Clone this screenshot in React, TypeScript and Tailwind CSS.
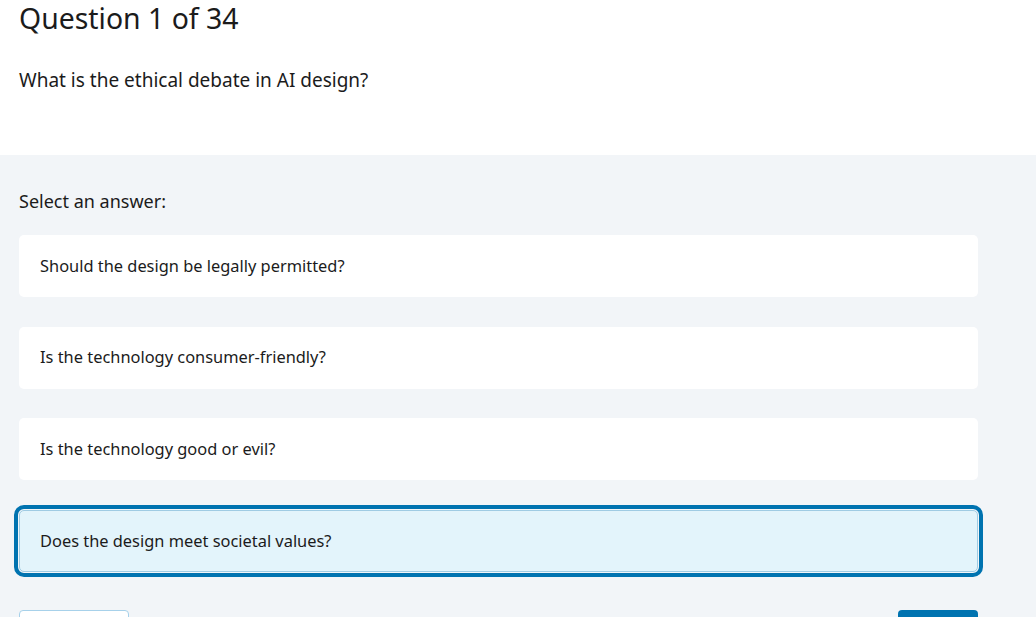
const OPTIONS = [
  'Should the design be legally permitted?',
  'Is the technology consumer-friendly?',
  'Is the technology good or evil?',
  'Does the design meet societal values?',
];

export default function App() {
  const selected = 3;
  return (
    <div className="h-[617px] overflow-hidden bg-white text-[#1b1b1b]" style={{ fontFamily: '"Noto Sans", "Open Sans", sans-serif' }}>
      <div className="h-[155px] px-[19px] pt-[3px]">
        <h1 className="text-[28.4px] leading-[30px]">Question 1 of 34</h1>
        <p className="mt-[33px] text-[19px] leading-[28px]">What is the ethical debate in AI design?</p>
      </div>

      <div className="bg-[#f2f5f8] px-[19px] pt-[33px]">
        <p className="text-[18px] leading-[26px]">Select an answer:</p>
        <div className="mt-[21px] flex w-[959px] flex-col gap-[29.5px]">
          {OPTIONS.map((opt, i) => (
            <div
              key={opt}
              className={
                i === selected
                  ? 'flex h-[62px] items-center rounded-[5px] border border-[#9fcbe3] bg-[#e3f4fb] px-[20px] pt-[2px] text-[16.4px] outline-4 outline-offset-1 outline-[#0073b0]'
                  : 'flex h-[62px] items-center rounded-[5px] bg-white px-[21px] text-[16.4px]'
              }
            >
              {opt}
            </div>
          ))}
        </div>
        <div className="mt-[38px] flex w-[959px] justify-between">
          <button className="h-[40px] w-[110px] rounded-[4px] border border-[#a7d1ea] bg-white" />
          <button className="h-[40px] w-[80px] rounded-[4px] bg-[#0073b0]" />
        </div>
      </div>
    </div>
  );
}
